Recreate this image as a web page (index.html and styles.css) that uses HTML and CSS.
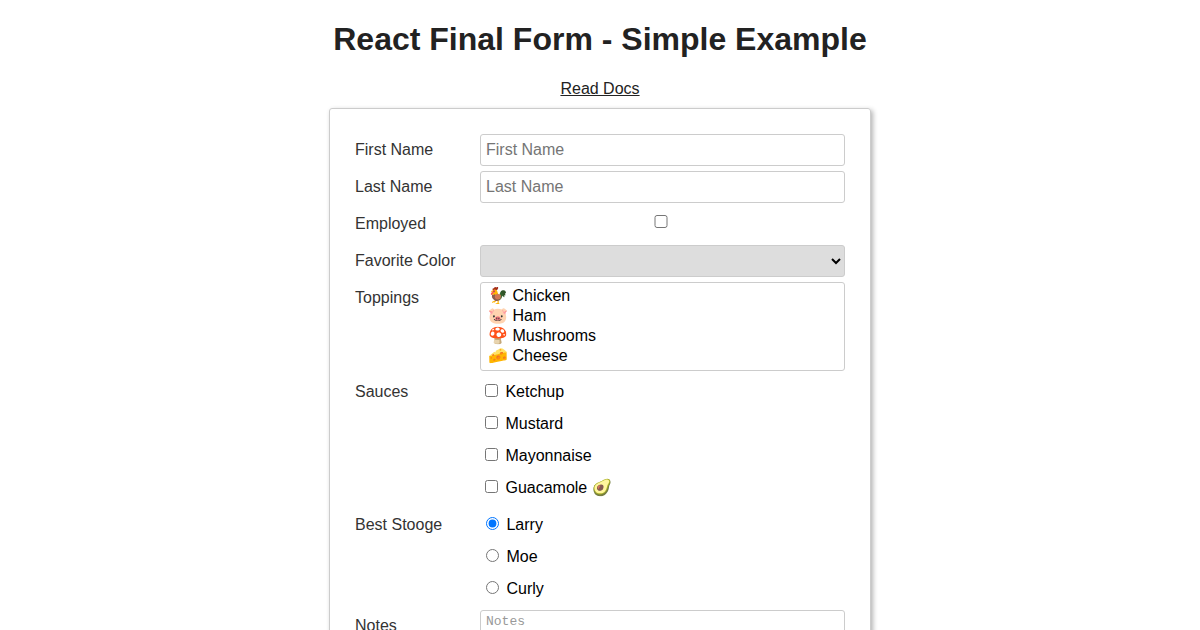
FILE: index.html
```html
<!DOCTYPE html>
<html lang="en">
<head>
<meta charset="utf-8">
<title>React Final Form - Simple Example</title>
<link rel="stylesheet" href="styles.css">
</head>
<body>
<main class="page">
  <h1 class="title">React Final Form - Simple Example</h1>
  <a class="docs" href="#docs">Read Docs</a>
  <form class="card">
    <div class="row"><label class="caption" for="first">First Name</label><input class="field line" id="first" type="text" placeholder="First Name"></div>
    <div class="row"><label class="caption" for="last">Last Name</label><input class="field line" id="last" type="text" placeholder="Last Name"></div>
    <div class="row"><label class="caption" for="employed">Employed</label><input class="single" id="employed" type="checkbox"></div>
    <div class="row"><label class="caption" for="color">Favorite Color</label><select class="field line color" id="color"><option></option></select></div>
    <div class="row"><label class="caption" for="toppings">Toppings</label><select class="field toppings" id="toppings" multiple><option>🐓 Chicken</option><option>🐷 Ham</option><option>🍄 Mushrooms</option><option>🧀 Cheese</option></select></div>
    <div class="row" role="group" aria-labelledby="sauces"><span class="caption" id="sauces">Sauces</span><div class="choices">
      <label class="choice"><input class="check" type="checkbox"> Ketchup</label>
      <label class="choice"><input class="check" type="checkbox"> Mustard</label>
      <label class="choice"><input class="check" type="checkbox"> Mayonnaise</label>
      <label class="choice"><input class="check" type="checkbox"> Guacamole 🥑</label>
    </div></div>
    <div class="row" role="radiogroup" aria-labelledby="stooge"><span class="caption" id="stooge">Best Stooge</span><div class="choices">
      <label class="choice"><input class="radio" type="radio" name="stooge" checked> Larry</label>
      <label class="choice"><input class="radio" type="radio" name="stooge"> Moe</label>
      <label class="choice"><input class="radio" type="radio" name="stooge"> Curly</label>
    </div></div>
    <div class="row"><label class="caption" for="notes">Notes</label><textarea class="field notes" id="notes" placeholder="Notes"></textarea></div>
  </form>
</main>
</body>
</html>
```
FILE: styles.css
```css
* { box-sizing: border-box; }
body { margin: 0; font: 16px/normal "Liberation Sans", Arial, sans-serif; color: #222; }
.page { text-align: center; padding: 0 20px 20px; }
.title { margin: 0; padding-top: 20px; font-size: 32px; line-height: 38px; color: #222; }
.docs { display: block; width: fit-content; margin: 21px auto 10px; line-height: 19px; color: #222; }
.card { max-width: 542px; margin: 0 auto; padding: 20px 25px; border: 1px solid #ccc; border-radius: 3px; box-shadow: 2px 2px 5px rgba(0, 0, 0, 0.3); text-align: left; }
.row { display: flex; margin-top: 5px; }
.caption { width: 110px; flex: none; color: #333; line-height: 32px; }
.field { flex: 1; min-width: 0; margin: 0 0 0 15px; padding: 3px 5px; font-size: 16px; font-family: "Liberation Sans", Arial, sans-serif; border: 1px solid #ccc; border-radius: 3px; }
.line { height: 32px; }
.single { flex: 1; margin: 7px 0 12px 12px; height: 13px; }
.color { background: #ddd; }
.toppings { height: 89px; color: #000; }
.choices { flex: 1; margin-left: 15px; color: #000; }
.choice { display: block; line-height: 32px; }
.check { margin: 3px 3px 3px 5px; }
.radio { margin: 3px 3px 3px 6px; }
.notes { height: 60px; font: 13px "Courier New", "Liberation Mono", monospace; }
.notes::placeholder { color: #999; }
```
